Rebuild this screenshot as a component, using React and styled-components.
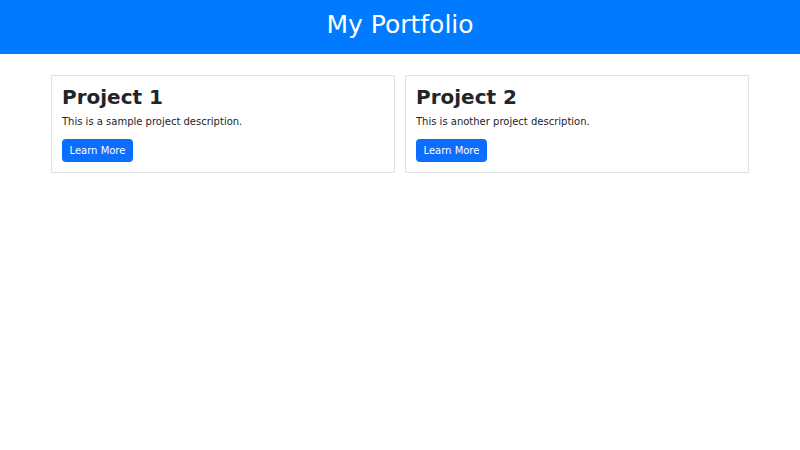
import React from "react";
import styled, { createGlobalStyle } from "styled-components";

const Global = createGlobalStyle`
  body { margin: 0; font-family: "DejaVu Sans", sans-serif; color: #212529; background: #fff; }
`;

const Header = styled.header`
  background: #007bff;
  height: 54px;
  box-sizing: border-box;
  padding: 10px 0 14px;
  text-align: center;
`;

const Title = styled.h1`
  margin: 0;
  color: #fff;
  font-size: 25px;
  line-height: 30px;
  font-weight: 400;
`;

const Grid = styled.main`
  width: 698px;
  margin: 21px auto 0;
  display: grid;
  grid-template-columns: 1fr 1fr;
  gap: 10px;
`;

const Card = styled.section`
  border: 1px solid #dee2e6;
  padding: 9px 10px 10px;
`;

const CardTitle = styled.h2`
  margin: 0 0 5px;
  font-size: 20px;
  font-weight: 700;
  line-height: 24px;
`;

const Text = styled.p`
  margin: 0 0 10px;
  font-size: 10px;
  line-height: 15px;
`;

const Button = styled.button`
  display: block;
  background: #0d6efd;
  color: #fff;
  border: none;
  border-radius: 4px;
  font-family: inherit;
  font-size: 10px;
  padding: 0 7.5px;
  line-height: 23px;
  height: 23px;
`;

const projects = [
  { title: "Project 1", desc: "This is a sample project description." },
  { title: "Project 2", desc: "This is another project description." },
];

export default function App() {
  return (
    <>
      <Global />
      <Header>
        <Title>My Portfolio</Title>
      </Header>
      <Grid>
        {projects.map((p) => (
          <Card key={p.title}>
            <CardTitle>{p.title}</CardTitle>
            <Text>{p.desc}</Text>
            <Button>Learn More</Button>
          </Card>
        ))}
      </Grid>
    </>
  );
}
